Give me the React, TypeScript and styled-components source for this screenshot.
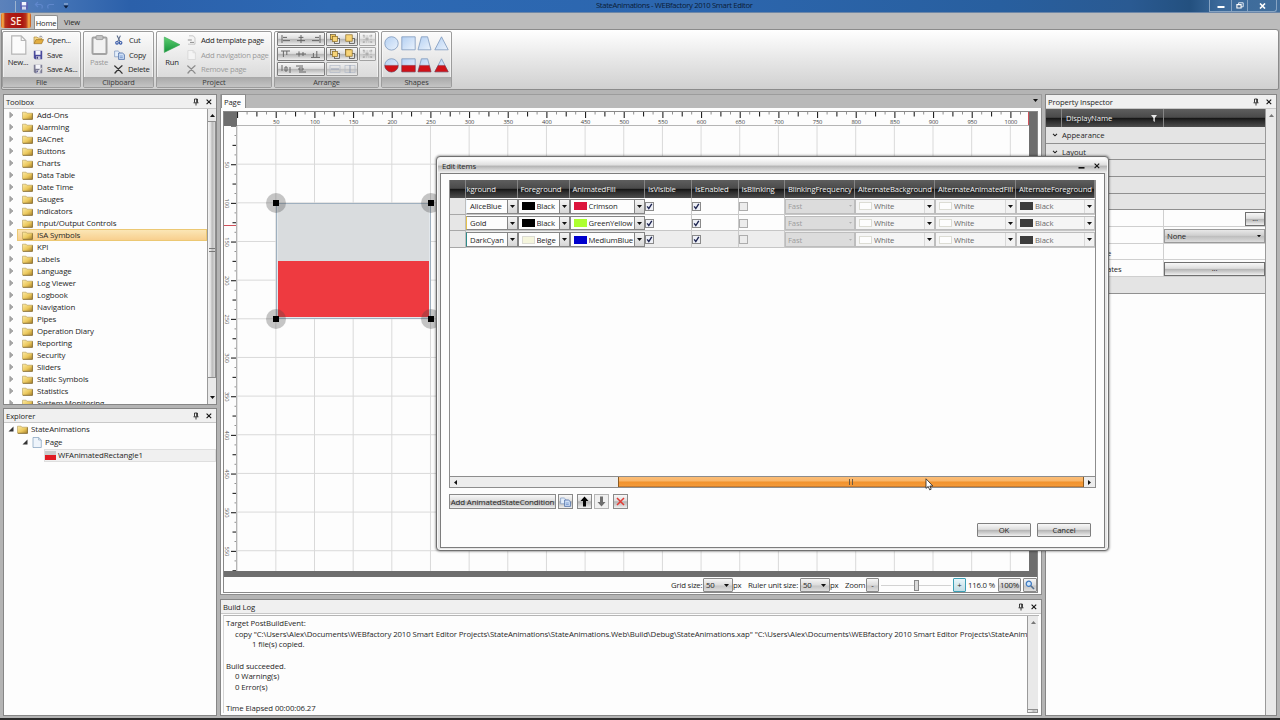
import React from 'react';
import styled, { createGlobalStyle, css } from 'styled-components';

const Global = createGlobalStyle`
  html, body { margin: 0; padding: 0; }
  body { width: 1280px; height: 720px; overflow: hidden; background: #b2b2b2; }
  * { box-sizing: border-box; }
  body, button { font-family: "Open Sans", "Noto Sans", sans-serif; font-size: 7.7px; letter-spacing: -0.14px; color: #262626; line-height: 10px; }
  svg { display: block; flex: none; }
`;

const steel = css`
  background: linear-gradient(#f8f8f8 0%, #dedede 45%, #b4b4b4 52%, #cfcfcf 75%, #f0f0f0 100%);
`;
const soft = css`
  background: linear-gradient(#f6f6f6 0%, #dcdcdc 50%, #c6c6c6 58%, #dedede 100%);
`;
const dark = css`
  background: linear-gradient(#5e5e5e 0%, #4a4a4a 46%, #161616 52%, #2b2b2b 66%, #4d4d4d 100%);
`;

/* ---------- window frame ---------- */
const Window = styled.div`
  position: relative; width: 1280px; height: 720px; overflow: hidden;
  display: flex; flex-direction: column; white-space: nowrap;
  background: #b4b4b4; border-bottom: 2px solid #2b2b2b;
`;
const TitleBar = styled.header`
  height: 13px; flex: none; display: flex; align-items: center; position: relative;
  background: linear-gradient(90deg, #5c82bb 0, #3f70b4 70px, #2b60aa 130px, #2d69b4 330px, #2c66ae 700px, #285f9f 1000px, #2a5a92 1130px, #23507f 1190px, #3c6a9b 1220px, #416e9c 100%);
  border-bottom: 1px solid #6d87a8;
`;
const QuickAccess = styled.div`display: flex; align-items: center; gap: 2px; padding-left: 15px; width: 596px; flex: none; height: 12px;`;
const WindowTitle = styled.div`color: #0b1c36; margin-top: -2px; width: 160px; letter-spacing: -0.36px;`;
const WindowButtons = styled.div`flex: 1; display: flex; justify-content: flex-end; padding-right: 3px; height: 12px;`;
const WinButton = styled.div<{ $w: number }>`
  width: ${p => p.$w}px; height: 12px; border: 1px solid #86a3c2; border-top: 0; border-right-width: 0;
  display: flex; align-items: center; justify-content: center;
  &:last-child { border-right-width: 1px; border-radius: 0 0 3px 0; }
`;
const RibbonTabs = styled.nav`height: 16px; flex: none; display: flex; align-items: flex-end; background: #bcbcbc; padding-left: 1px; position: relative; z-index: 1;`;
const AppButton = styled.div`
  width: 30px; height: 15px; margin-bottom: 1px; border-radius: 2px; color: #ffe9dc; font-weight: 600; font-size: 10px; letter-spacing: 0;
  display: flex; align-items: center; justify-content: center;
  background: linear-gradient(90deg, #d9691d 0, #f7b24a 2px, #b8341a 4px, #b01c14 8px, #a81410 21px, #b8341a 25px, #f7b24a 28px, #c24f1a 30px);
`;
const RibbonTab = styled.div<{ $active?: boolean }>`
  height: 14px; margin-left: ${p => (p.$active ? 3 : 4)}px; width: ${p => (p.$active ? 24 : 20)}px; line-height: 15px; text-align: center; font-size: 7.5px;
  ${p => p.$active && css`background: #fdfdfd; border: 1px solid #8f8f8f; border-bottom: 0; border-radius: 2px 2px 0 0;`}
`;
const Ribbon = styled.div`
  height: 61px; flex: none; border: 1px solid #8b8b8b; border-radius: 0 3px 2px 2px; margin: 0 1px 0 1px;
  background: linear-gradient(#ffffff, #e7e7e7 50%, #d0d0d0); display: flex; gap: 2px; padding: 1px 0 0 0; letter-spacing: -0.28px;
`;
const Group = styled.section<{ $w: number }>`
  width: ${p => p.$w}px; height: 57px; border: 1px solid #9c9c9c; border-radius: 2px; display: flex; flex-direction: column;
  background: linear-gradient(#fbfbfb, #e8e8e8 50%, #d3d3d3); box-shadow: inset 0 0 0 1px rgba(255,255,255,.5);
`;
const GroupBody = styled.div`flex: 1; display: flex; min-height: 0;`;
const GroupTitle = styled.div`height: 10px; line-height: 10px; text-align: center; background: linear-gradient(#a8a8a8, #c4c4c4); color: #3a3a3a; font-size: 7.4px; letter-spacing: -0.12px;`;
const BigButton = styled.div<{ $w: number; $off?: boolean; $pt?: number }>`
  width: ${p => p.$w}px; display: flex; flex-direction: column; align-items: center; justify-content: space-between; padding: ${p => p.$pt ?? 3}px 0 10px;
  color: ${p => (p.$off ? '#9a9a9a' : '#262626')};
`;
const Commands = styled.div`display: flex; flex-direction: column; padding-top: 1px;`;
const Command = styled.div<{ $off?: boolean; $gap?: number }>`
  height: 14.6px; display: flex; align-items: center; gap: ${p => p.$gap ?? 4}px; color: ${p => (p.$off ? '#9b9b9b' : '#262626')};
`;
const ArrangeGrid = styled.div`display: flex; flex-direction: column; gap: 1px; padding: 0 0 0 2px;`;
const ArrangeRow = styled.div`display: flex; gap: 1px;`;
const ArrangeSet = styled.div<{ $w: number; $off?: boolean }>`
  width: ${p => p.$w}px; height: 14px; border: 1px solid #7d7d7d; border-radius: 1px; display: flex; align-items: center; justify-content: space-around; ${steel}
  opacity: ${p => (p.$off ? 0.65 : 1)};
`;
const ShapeGrid = styled.div`display: grid; grid-template-columns: repeat(4, 16.6px); grid-template-rows: 22px 22px; align-items: center; padding: 0 0 0 2px;`;

/* ---------- docking area ---------- */
const Workspace = styled.main`flex: 1; display: flex; padding: 4px 3px 2px 3px; min-height: 0;`;
const Column = styled.div<{ $w: number; $ml?: number }>`width: ${p => p.$w}px; margin-left: ${p => p.$ml ?? 0}px; display: flex; flex-direction: column; flex: none;`;
const Panel = styled.section<{ $h: number; $mt?: number }>`
  height: ${p => p.$h}px; margin-top: ${p => p.$mt ?? 0}px; background: #fdfdfd; border: 1px solid #868686; display: flex; flex-direction: column; overflow: hidden; flex: none;
`;
const PanelHeader = styled.div`
  height: 14px; flex: none; display: flex; align-items: center; padding: 0 4px 0 2px; background: #f0f0f0; border-bottom: 1px solid #c8c8c8; letter-spacing: -0.12px;
`;
const PanelTitle = styled.span`flex: 1;`;
const PanelIcons = styled.div`display: flex; gap: 7px; align-items: center;`;
const Split = styled.div`display: flex; flex: 1; min-height: 0;`;
const List = styled.div`flex: 1; overflow: hidden;`;
const TreeRow = styled.div`
  height: 12px; display: flex; align-items: center; padding-left: 4px; flex: none; font-size: 7.9px; letter-spacing: -0.12px;
`;
const TreeItem = styled.div<{ $sel?: boolean }>`
  flex: 1; height: 12px; margin-left: 2px; padding-left: 4px; display: flex; align-items: center; gap: 4px; border: 1px solid transparent;
  ${p => p.$sel && css`background: linear-gradient(#fbe6b6, #f8cf8e); border-color: #ecc873;`}
`;
const ScrollBar = styled.div<{ $w?: number }>`width: ${p => p.$w ?? 9}px; background: #e9e9e9; border-left: 1px solid #9a9a9a; display: flex; flex-direction: column; align-items: center; flex: none;`;
const ScrollButton = styled.div<{ $h: number }>`height: ${p => p.$h}px; display: flex; align-items: center; justify-content: center;`;
const Thumb = styled.div<{ $h: number }>`
  height: ${p => p.$h}px; width: 100%; border: 1px solid #8e8e8e; border-left: 0; background: linear-gradient(90deg, #f6f6f6, #dcdcdc 45%, #b8b8b8 55%, #d8d8d8); display: flex; align-items: center; justify-content: center;
`;
const LastScrollButton = styled(ScrollButton)`align-items: flex-end; padding-bottom: 5px;`;
const Grip = styled.div`width: 6px; height: 4px; border: 1px solid #777; border-width: 1px 0;`;
const ExplorerRow = styled.div<{ $pl: number; $h: number; $gap?: number }>`height: ${p => p.$h}px; padding-left: ${p => p.$pl}px; display: flex; align-items: center; gap: ${p => p.$gap ?? 3}px; font-size: 7.9px; letter-spacing: -0.12px; flex: none;`;
const ExplorerSelected = styled.div`height: 13px; margin: 0 0 0 40px; display: flex; align-items: center; gap: 2px; background: #f0f0f0; border: 1px solid #dedede; font-size: 7.9px; letter-spacing: -0.12px;`;
const RectIcon = styled.i`width: 11px; height: 9px; background: linear-gradient(#c9cdcd 40%, #e01b22 40%);`;

/* ---------- designer ---------- */
const DocTabs = styled.div`height: 14px; flex: none; display: flex; align-items: flex-end; justify-content: space-between; background: #b9b9b9; border: 1px solid #9c9c9c; border-bottom: 0; padding-right: 3px;`;
const DocTab = styled.div`height: 14px; width: 25px; background: #fdfdfd; border: 1px solid #8c8c8c; border-bottom: 0; line-height: 15px; padding-left: 2px;`;
const DocDrop = styled.div`height: 9px;`;
const DocPanel = styled.div`height: 487px; flex: none; background: #fdfdfd; border: 1px solid #8c8c8c; border-top: 0; padding: 3px 3px 2px 2px; display: flex; flex-direction: column;`;
const DocInner = styled.div`border: 1px solid #888; display: flex; flex-direction: column; flex: 1;`;
const Designer = styled.div`display: grid; grid-template-columns: 13px 792px 1fr; grid-template-rows: 14px 445px 6px; background: #6e6e6e; height: 465px; flex: none; overflow: hidden;`;
const RulerH = styled.div`background: #fdfdfd; border-bottom: 1px solid #b5b5b5; overflow: hidden;`;
const RulerV = styled.div`background: #fdfdfd; border-right: 1px solid #b5b5b5; overflow: hidden;`;
const Canvas = styled.div`
  position: relative; overflow: hidden;
  background-color: #fdfdfd;
  background-image: linear-gradient(90deg, transparent 37.67px, #d9d9d9 37.67px), linear-gradient(transparent 37.67px, #d9d9d9 37.67px);
  background-size: 38.667px 38.667px; background-position: 0.7px 0;
`;
const Shape = styled.div`
  position: absolute; left: 39px; top: 77px; width: 155px; height: 116px; border: 1px solid #9fb0bf; padding: 0 1px 1px 1px;
  background: linear-gradient(#d9dcde 50.5%, #ee3a40 50.5%) content-box, #e3e8ec;
`;
const Handle = styled.div<{ $x: number; $y: number }>`
  position: absolute; left: ${p => p.$x - 10}px; top: ${p => p.$y - 10}px; width: 20px; height: 20px; border-radius: 50%; background: rgba(70,70,70,.3); padding: 7px;
  &::after { content: ''; display: block; width: 6px; height: 6px; background: #000; }
`;
const StatusBar = styled.div`flex: 1; display: flex; align-items: center; justify-content: flex-end; padding: 1px 0 0; letter-spacing: -0.2px; font-size: 7.8px;`;
const Spacer = styled.div<{ $w: number; $h?: number }>`width: ${p => p.$w}px; height: ${p => p.$h ?? 0}px; flex: none;`;
const StatusText = styled.span<{ $w: number }>`width: ${p => p.$w}px; flex: none;`;
const StatusCombo = styled.div`width: 30px; height: 14px; border: 1px solid #8a8a8a; border-radius: 1px; display: flex; align-items: center; justify-content: space-between; padding: 0 3px 0 2px; ${soft}`;
const StatusButton = styled.div<{ $w: number; $hot?: boolean }>`
  width: ${p => p.$w}px; height: 14px; border: 1px solid ${p => (p.$hot ? '#3c9fb5' : '#8a8a8a')}; border-radius: 1px; display: flex; align-items: center; justify-content: center; flex: none; ${soft}
  ${p => p.$hot && css`background: linear-gradient(#e8f6fa, #c3dde4);`}
`;
const Slider = styled.div`width: 74px; height: 12px; flex: none; display: flex; align-items: center; justify-content: center; background: linear-gradient(#d2d2d2, #d2d2d2) center / 70px 1px no-repeat;`;
const SliderThumb = styled.i`width: 5px; height: 11px; border: 1px solid #888; background: #dadada; margin-left: 1px;`;

/* ---------- build log ---------- */
const LogBox = styled.div`margin: 1px 2px 2px 2px; flex: 1; display: flex; border-top: 1px solid #b5b5b5; border-left: 1px solid #d5d5d5; overflow: hidden;`;
const LogText = styled.pre`margin: 0; padding: 2px 0 0 2px; width: 803px; overflow: hidden; font-family: inherit; line-height: 10.65px; font-size: 7.8px; letter-spacing: -0.1px;`;
const LogLine = styled.div<{ $in?: number }>`padding-left: ${p => p.$in ?? 0}px; height: 10.65px;`;

/* ---------- property inspector ---------- */
const DarkHeader = styled.div`height: 18px; display: flex; color: #f4f4f4; ${dark}`;
const DarkCell = styled.div<{ $w: number; $pl?: number }>`
  width: ${p => p.$w}px; flex: none; height: 18px; line-height: 18px; border-right: 1px solid #858585; padding-left: ${p => p.$pl ?? 3}px; overflow: hidden; letter-spacing: -0.12px; font-weight: 500;
  display: flex; align-items: center; justify-content: space-between; padding-right: 0;
`;
const PropGroup = styled.div`height: 16.7px; background: #e4e4e4; border-bottom: 1px solid #909090; display: flex; align-items: center; gap: 4px; padding: 1px 0 0 6px; font-size: 7.7px; letter-spacing: -0.05px;`;
const PropRow = styled.div`height: 16.6px; display: flex; border-bottom: 1px solid #cfcfcf;`;
const PropName = styled.div`width: 118px; flex: none; padding-left: 61px; line-height: 18px; border-right: 1px solid #cfcfcf;`;
const PropValue = styled.div`flex: 1; display: flex; justify-content: flex-end; padding: 2px 0 0 0;`;
const PropButton = styled.div<{ $w?: number }>`width: ${p => (p.$w ? p.$w + 'px' : '100%')}; height: 14px; border: 1px solid #6f6f6f; text-align: center; line-height: 11px; ${steel}`;
const PropCombo = styled.div`width: 100%; height: 14px; border: 1px solid #9a9a9a; display: flex; align-items: center; justify-content: space-between; padding: 0 3px 0 2px; background: linear-gradient(#e8e8e8, #cfcfcf 45%, #bdbdbd 52%, #dcdcdc);`;

/* ---------- dialog ---------- */
const Dialog = styled.div`
  position: absolute; left: 436px; top: 156px; width: 673px; height: 395px; border: 1px solid #707070; border-radius: 4px; background: #e6e6e6; padding: 0 3px 2px 3px;
  display: flex; flex-direction: column; box-shadow: 0 0 2px 1px rgba(0,0,0,.3), inset 0 0 0 1px #f8f8f8;
`;
const DialogTitle = styled.div`
  height: 15px; margin: 1px -2px 0; padding: 0 7px 0 4px; flex: none; display: flex; align-items: center; justify-content: space-between; border-radius: 3px 3px 0 0;
  background: linear-gradient(#ffffff 0, #dedede 48%, #b2b2b2 53%, #cfcfcf 75%, #f2f2f2 100%);
`;
const DialogIcons = styled(PanelIcons)`gap: 9px;`;
const DialogBody = styled.div`flex: 1; border: 1px solid #7d7d7d; background: #fdfdfd; padding: 6px 9px 0 8px; display: flex; flex-direction: column;`;
const Table = styled.div`height: 308px; width: 647px; flex: none; border: 1px solid #8d8d8d; border-top: 0; display: flex; flex-direction: column;`;
const TableRow = styled.div<{ $alt?: boolean }>`height: 16.7px; display: flex; border-bottom: 1px solid #c6c6c6; background: ${p => (p.$alt ? '#ededed' : '#fdfdfd')};`;
const Cell = styled.div<{ $w: number; $tone?: 'stub' | 'check' }>`
  width: ${p => p.$w}px; flex: none; height: 16.7px; overflow: hidden; display: flex; align-items: center;
  ${p => p.$tone === 'stub' && css`background: #e6e6e6; border-right: 1px solid #bdbdbd; border-bottom: 1px solid #a8a8a8;`}
  ${p => p.$tone === 'check' && css`border-right: 1px solid #c9c9c9;`}
`;
const Combo = styled.div<{ $off?: boolean; $flat?: boolean; $edge?: string }>`
  flex: 1; height: 14.5px; margin: 0; display: flex; align-items: center; border: 1px solid ${p => (p.$off ? '#bdbdbd' : '#858585')}; min-width: 0;
  background: ${p => (p.$flat ? '#dcdcdc' : p.$off ? '#f5f5f5' : '#fdfdfd')}; color: ${p => (p.$flat ? '#9c9c9c' : p.$off ? '#6b6b6b' : '#262626')};
  ${p => p.$edge && css`border-left-color: ${p.$edge};`}
`;
const Swatch = styled.i<{ $c: string; $line?: string }>`width: 13px; height: 8px; margin: 0 2px 0 3px; border: 1px solid ${p => p.$line ?? p.$c}; background: ${p => p.$c}; flex: none;`;
const ComboText = styled.span<{ $pl?: number }>`flex: 1; overflow: hidden; padding-left: ${p => p.$pl ?? 0}px; letter-spacing: -0.12px;`;
const ComboDrop = styled.span<{ $off?: boolean }>`
  width: 10px; height: 12.5px; border-left: 1px solid ${p => (p.$off ? '#d8d8d8' : '#858585')}; display: flex; align-items: center; justify-content: center; flex: none;
  background: ${p => (p.$off ? '#f2f2f2' : 'linear-gradient(#f4f4f4, #d6d6d6)')};
`;
const Check = styled.span<{ $off?: boolean }>`
  width: 9px; height: 9px; border: 1px solid ${p => (p.$off ? '#adadad' : '#8a8a8a')}; background: ${p => (p.$off ? '#ececec' : '#eef0f6')}; display: flex; align-items: center; justify-content: center;
`;
const HScroll = styled.div`height: 11px; margin-top: auto; display: flex; border-top: 1px solid #8d8d8d; background: #ededed;`;
const HArrow = styled.div<{ $w: number }>`width: ${p => p.$w}px; display: flex; align-items: center; padding-left: 4px;`;
const HThumb = styled.div`
  flex: 1; border: 1px solid #8a5a22; border-width: 0 1px; background: linear-gradient(#fbbd77 0, #f9b568 42%, #f1922d 48%, #f39a3a 88%, #a8662b 100%);
  display: flex; align-items: center; justify-content: center; gap: 2px;
  i { width: 1px; height: 6px; background: #6c5b45; }
`;
const ToolRow = styled.div`display: flex; margin-top: 6px; height: 15px; align-items: stretch;`;
const ToolButton = styled.div<{ $w: number; $ml?: number; $off?: boolean }>`
  width: ${p => p.$w}px; margin-left: ${p => p.$ml ?? 0}px; border: 1px solid ${p => (p.$off ? '#b5b5b5' : '#8a8a8a')}; display: flex; align-items: center; justify-content: center; ${steel}
  font-size: 7.9px; letter-spacing: -0.12px;
  ${p => p.$off && css`background: #f0f0f0;`}
`;
const DialogActions = styled.div`display: flex; justify-content: flex-end; gap: 6px; margin-top: 14px; padding-right: 4px;`;
const ActionButton = styled.div`width: 54px; height: 14px; border: 1px solid #7f7f7f; border-radius: 1px; line-height: 13px; text-align: center; ${steel}`;
const Pointer = styled.div`position: absolute; left: 925px; top: 478px;`;

/* ---------- icons ---------- */
const Pin = () => (<svg width="6" height="8" viewBox="0 0 6 8"><path d="M1.5 4.5V1h2.8v3.5M0.5 4.8h5M3 5v2.5" fill="none" stroke="#111" strokeWidth=".8" /><path d="M3.4 1h1v3.6h-1z" fill="#111" /></svg>);
const Close = () => (<svg width="6" height="6" viewBox="0 0 6 6"><path d="M.6.6l4.6 4.6M5.2.6L.6 5.2" stroke="#111" strokeWidth="1.1" /></svg>);
const Down = ({ c = '#111', s = 5 }: { c?: string; s?: number }) => (<svg width={s} height={s * 0.6} viewBox="0 0 5 3"><path d="M0 0h5L2.5 3z" fill={c} /></svg>);
const Up = ({ c = '#111' }: { c?: string }) => (<svg width="5" height="3" viewBox="0 0 5 3"><path d="M0 3h5L2.5 0z" fill={c} /></svg>);
const Expand = () => (<svg width="7" height="8" viewBox="0 0 7 8"><path d="M1.8 1.2L5 4 1.8 6.8z" fill="#aaa" stroke="#8a8a8a" strokeWidth=".6" /></svg>);
const Collapse = () => (<svg width="6" height="6" viewBox="0 0 6 6"><path d="M5.5.5v5h-5z" fill="#333" /></svg>);
const Folder = () => (
  <svg width="11" height="9" viewBox="0 0 11 9">
    <defs><linearGradient id="fold" x1="0" y1="0" x2="1" y2="1"><stop offset="0" stopColor="#fbeaa6" /><stop offset=".55" stopColor="#ecc95e" /><stop offset="1" stopColor="#a9822c" /></linearGradient></defs>
    <path d="M.5 1.2h3.6l.8 1h5.6v6H.5z" fill="url(#fold)" stroke="#b49a55" strokeWidth=".6" /><path d="M10.4 2.4v6H1" fill="none" stroke="#7a6126" strokeWidth=".7" />
  </svg>
);
const PageIcon = ({ w = 10, h = 11, c = '#7f9dbb', fill = '#eef4fb' }) => (
  <svg width={w} height={h} viewBox="0 0 10 11" preserveAspectRatio="none"><path d="M1 .5h5.6L9.3 3v7.5H1z" fill={fill} stroke={c} strokeWidth=".7" /><path d="M6.6.5V3h2.7" fill="none" stroke={c} strokeWidth=".6" /></svg>
);
const SaveIcon = ({ gray }: { gray?: boolean }) => (
  <svg width="10" height="10" viewBox="0 0 10 10"><path d="M.8.8h8.4v8.4H2L.8 8z" fill={gray ? '#7c7c93' : '#4a4a9c'} /><path d="M2.5.8h5v4h-5z" fill="#f4f4fa" /><path d="M3 6.2h4.4v3H3z" fill="#c9c9dd" /><path d="M3.6 6.8h1.3v2H3.6z" fill="#30306e" />{gray && <path d="M4.5 9L8.6 4" stroke="#ddd" strokeWidth="1.3" />}</svg>
);
const OpenIcon = () => (<svg width="11" height="10" viewBox="0 0 11 10"><path d="M1 8.5V2h3l1 1h3.6v1.6" fill="#f3d789" stroke="#a67d2e" strokeWidth=".6" /><path d="M1 8.7L3 4.6h7.6L8.6 8.7z" fill="#e3ae41" stroke="#94691e" strokeWidth=".6" /><path d="M6.5 1.4q2-1 3 1" fill="none" stroke="#667" strokeWidth=".7" /></svg>);
const PasteIcon = () => (<svg width="17" height="20" viewBox="0 0 17 20"><rect x="1.5" y="2.5" width="14" height="16.5" rx="1" fill="#f2f2f2" stroke="#a3a3a3" strokeWidth="2" /><rect x="5" y=".6" width="7" height="4" rx="1" fill="#c4c4c4" stroke="#8f8f8f" strokeWidth=".8" /></svg>);
const CutIcon = () => (<svg width="10" height="10" viewBox="0 0 10 10"><path d="M3 .6l3 6M6.4.6L3.8 6.4" stroke="#5b6c8a" strokeWidth="1.1" /><circle cx="3" cy="7.8" r="1.3" fill="none" stroke="#3558a8" strokeWidth="1.1" /><circle cx="6.6" cy="7.8" r="1.3" fill="none" stroke="#3558a8" strokeWidth="1.1" /></svg>);
const CopyIcon = () => (<svg width="11" height="10" viewBox="0 0 11 10"><path d="M.6 1h3.6l1.4 1.3v4.5h-5z" fill="#e4eefb" stroke="#7a93bd" strokeWidth=".7" /><path d="M4.6 3h3.8l2 1.6v4.8H4.6z" fill="#cfe0f7" stroke="#4a6ba5" strokeWidth=".8" /><path d="M5.8 6h3M5.8 7.6h3" stroke="#5d83c2" strokeWidth=".7" /></svg>);
const DeleteIcon = ({ c = '#333' }) => (<svg width="9" height="9" viewBox="0 0 9 9"><path d="M.8 1Q4 3.5 8 8.2M8 .8Q4.5 3.5 1 8" stroke={c} strokeWidth="1.3" fill="none" strokeLinecap="round" /></svg>);
const RunIcon = () => (<svg width="18" height="18" viewBox="0 0 18 18"><defs><linearGradient id="run" x1="0" y1="0" x2="0" y2="1"><stop offset="0" stopColor="#5ccf70" /><stop offset="1" stopColor="#14933a" /></linearGradient></defs><path d="M1.3 1L17 8.7 1.3 16.4z" fill="url(#run)" stroke="#3aa856" strokeWidth=".6" /></svg>);
const TemplateIcon = () => (<svg width="9" height="10" viewBox="0 0 9 10"><path d="M2 .8h4L8 2.6v6.6H1" fill="#f4f4f4" stroke="#b5b5b5" strokeWidth=".7" /><path d="M.8 5h4M3 7.4h4" stroke="#8f8f8f" /></svg>);

const alignPaths = [
  'M1 0v8M2 2.4h4M2 5.6h7', 'M5 0v8M2.6 2.4h4.8M1 5.6h8', 'M9 0v8M4 2.4h4M1 5.6h7',
  'M0 1h9M2.4 1v6M5.8 1v4', 'M0 4h10M3 1.4v5.2M7 2v4', 'M0 7.4h9M2.4 3v4M5.8 1v6',
  'M1 0v6M9 2v6M4 2v4h2v-4z', 'M0 1h7M3 7h7M3 3h4v2H3z',
];
const AlignIcon = ({ i }: { i: number }) => (<svg width="10" height="8" viewBox="0 0 10 8"><path d={alignPaths[i]} stroke="#666" strokeWidth="1" fill="none" /></svg>);
const OrderIcon = ({ v }: { v: number }) => (
  <svg width="10" height="10" viewBox="0 0 10 10">
    {v !== 1 && <rect x=".6" y=".6" width="5" height="5" fill={v === 2 ? '#d8d8d8' : '#f2c75b'} stroke="#6b5a30" strokeWidth=".7" />}
    <rect x="4.4" y="4.4" width="5" height="5" fill={v === 0 ? '#e8e8e8' : '#ddd'} stroke="#444" strokeWidth=".7" />
    <rect x={v === 1 || v === 3 ? 0.8 : 2.4} y={v === 1 || v === 3 ? 0.8 : 2.4} width={v % 2 ? 6.4 : 5.2} height={v % 2 ? 6.4 : 5.2} fill="#f7d478" stroke="#8b6c25" strokeWidth=".7" />
  </svg>
);
const GroupIcon = () => (<svg width="11" height="10" viewBox="0 0 11 10"><path d="M2 2h7v6H2z" fill="none" stroke="#8a8a8a" strokeWidth=".8" strokeDasharray="1.4 1" /><path d="M3.5 3.5h3v3h-3zM.8.8h1.8v1.8H.8zM8.4.8h1.8v1.8H8.4zM.8 7.2h1.8V9H.8zM8.4 7.2h1.8V9H8.4z" fill="#8f8f8f" /></svg>);
const SizeIcon = ({ v }: { v?: boolean }) => (<svg width="12" height="8" viewBox="0 0 12 8"><rect x="1" y=".6" width="10" height="6.8" fill="none" stroke="#9aa6ba" strokeWidth=".7" /><path d={v ? 'M6 0v8' : 'M2 4h8'} stroke="#6f7f9f" /></svg>);

const outlines = ['', 'M.8.8h13.4v13H.8z', 'M4.4.8h6.2l3.4 13H1z', 'M7.5.8l6.7 13H.8z'];
const bottoms = ['', 'M.8 7.4h13.4v6.4H.8z', 'M2.7 7.4h9.6L14 13.8H1z', 'M4.1 7.4h6.8l3.3 6.4H.8z'];
const ShapeIcon = ({ i, fill }: { i: number; fill?: boolean }) => (
  <svg width="15" height="15" viewBox="0 0 15 15">
    <defs><linearGradient id="blue" x1="0" y1="0" x2="1" y2="1"><stop offset="0" stopColor="#b4d0f2" /><stop offset="1" stopColor="#eaf2fc" /></linearGradient></defs>
    {i === 0 ? <circle cx="7.5" cy="7.4" r="6.7" fill="url(#blue)" stroke="#7d98bd" strokeWidth=".8" /> : <path d={outlines[i]} fill="url(#blue)" stroke="#7d98bd" strokeWidth=".8" />}
    {fill && (i === 0 ? <path d="M.8 7.4h13.4a6.7 6.5 0 0 1-13.4 0z" fill="#cf1118" stroke="#8a2a35" strokeWidth=".5" /> : <path d={bottoms[i]} fill="#cf1118" stroke="#8a2a35" strokeWidth=".5" />)}
  </svg>
);

/* ---------- rulers ---------- */
const STEP = 38.667;
const ticks = (n: number) => Array.from({ length: n }, (_, k) => ({ pos: (k * STEP) / 4, size: k % 4 === 0 ? 6 : k % 2 === 0 ? 4.5 : 2.5 }));
const HorizontalRuler = () => (
  <svg width="792" height="13">
    {ticks(83).map((t, k) => <rect key={k} x={t.pos} y="0" width={k % 2 ? 0.8 : 1.1} height={t.size} fill={k % 2 ? '#777' : '#222'} />)}
    {Array.from({ length: 20 }, (_, k) => <text key={k} x={(k + 1) * STEP + 0.5} y="12.2" fontSize="5.8" textAnchor="middle" letterSpacing="-0.15" fill="#444">{(k + 1) * 50}</text>)}
    <rect x="791" y="0" width="1" height="13" fill="#d0505a" />
  </svg>
);
const VerticalRuler = () => (
  <svg width="13" height="446">
    {ticks(47).map((t, k) => <rect key={k} x={13 - t.size} y={t.pos - 0.5} height={k % 2 ? 0.8 : 1.1} width={t.size} fill={k % 2 ? '#777' : '#222'} />)}
    {Array.from({ length: 11 }, (_, k) => <text key={k} transform={`translate(1.3 ${(k + 1) * STEP}) rotate(90)`} fontSize="5.8" textAnchor="middle" letterSpacing="-0.15" fill="#555">{(k + 1) * 50}</text>)}
    <rect x="0" y="99" width="13" height="1" fill="#d0505a" />
  </svg>
);

const toolbox = ['Add-Ons', 'Alarming', 'BACnet', 'Buttons', 'Charts', 'Data Table', 'Date Time', 'Gauges', 'Indicators', 'Input/Output Controls', 'ISA Symbols', 'KPI', 'Labels', 'Language', 'Log Viewer', 'Logbook', 'Navigation', 'Pipes', 'Operation Diary', 'Reporting', 'Security', 'Sliders', 'Static Symbols', 'Statistics', 'System Monitoring'];
const columns: [string, number, number][] = [['', 16, 3], ['kground', 51.5, 0.5], ['Foreground', 52, 3], ['AnimatedFill', 75.5, 3], ['IsVisible', 47, 3], ['IsEnabled', 46.5, 3], ['IsBlinking', 46.5, 3], ['BlinkingFrequency', 70, 3], ['AlternateBackground', 80, 3], ['AlternateAnimatedFill', 81, 3], ['AlternateForeground', 79, 3]];
const rows = [
  { edge: '#f0f8ff', bg: 'AliceBlue', fg: ['Black', '#000'], fill: ['Crimson', '#dc143c'] },
  { edge: '#e5c24a', bg: 'Gold', fg: ['Black', '#000'], fill: ['GreenYellow', '#adff2f'] },
  { edge: '#2d8b8b', bg: 'DarkCyan', fg: ['Beige', '#f5f5dc'], fill: ['MediumBlue', '#0000cd'] },
];

const ColorCombo = ({ color, name, off }: { color: string; name: string; off?: boolean }) => (
  <Combo $off={off}>
    <Swatch $c={color} $line={color === '#f5f5dc' || color === '#fdfdfd' ? '#dcdcd4' : undefined} />
    <ComboText>{name}</ComboText>
    <ComboDrop $off={off}><Down /></ComboDrop>
  </Combo>
);
const Tick = ({ on }: { on?: boolean }) => (
  <Check $off={!on}>{on && <svg width="7" height="7" viewBox="0 0 7 7"><path d="M1.2 3.4L2.8 5.6 5.8.9" fill="none" stroke="#1c2350" strokeWidth="1.4" /></svg>}</Check>
);
const HeaderBar = ({ title }: { title: string }) => (<PanelHeader><PanelTitle>{title}</PanelTitle><PanelIcons><Pin /><Close /></PanelIcons></PanelHeader>);

export default function App() {
  return (
    <Window>
      <Global />
      <TitleBar>
        <QuickAccess>
          <svg width="46" height="11" viewBox="0 0 46 11"><path d="M.5 0v11" stroke="#9db3cf" /><path d="M5 1h8v7.5H5z" fill="#5a64b4" /><path d="M6.8 1h4.4v3.4H6.8z" fill="#f4f6ff" /><path d="M7 5.6h4v3H7z" fill="#d6daf0" /><path d="M21 3.5h4.5q3 1 1.2 4M23 1l-2.6 2.5L23 6M39 3.5h-4.5q-3 1-1.2 4" fill="none" stroke="#5f87cc" strokeWidth="1.2" /></svg>
          <svg width="6" height="6" viewBox="0 0 6 6"><path d="M.5 2.6h5L3 5.6z" fill="#0e1f3c" /><path d="M1 1h4" stroke="#c8d6ea" strokeWidth=".8" /></svg>
        </QuickAccess>
        <WindowTitle>StateAnimations - WEBfactory 2010 Smart Editor</WindowTitle>
        <WindowButtons>
          <WinButton $w={22}><svg width="8" height="7" viewBox="0 0 8 7"><path d="M.5 4h7v2h-7z" fill="#fff" /></svg></WinButton>
          <WinButton $w={16}><svg width="8" height="7" viewBox="0 0 8 7"><path d="M2.6.8h4.6v4H2.6z" fill="none" stroke="#dfe8f2" /><path d="M.9 2.6h4.2v3.4H.9z" fill="#46678c" stroke="#fff" strokeWidth="1.1" /></svg></WinButton>
          <WinButton $w={30}><svg width="7" height="6" viewBox="0 0 7 6"><path d="M1 .5l5 5M6 .5l-5 5" stroke="#fff" strokeWidth="1.6" /></svg></WinButton>
        </WindowButtons>
      </TitleBar>
      <RibbonTabs>
        <AppButton>SE</AppButton>
        <RibbonTab $active>Home</RibbonTab>
        <RibbonTab>View</RibbonTab>
      </RibbonTabs>
      <Ribbon>
        <Group $w={79}>
          <GroupBody>
            <BigButton $w={30}><PageIcon w={17} h={20} c="#b5b5b5" fill="#fbfbfb" />New...</BigButton>
            <Commands>
              <Command $gap={3}><OpenIcon />Open...</Command>
              <Command><SaveIcon />Save</Command>
              <Command><SaveIcon gray />Save As...</Command>
            </Commands>
          </GroupBody>
          <GroupTitle>File</GroupTitle>
        </Group>
        <Group $w={71}>
          <GroupBody>
            <BigButton $w={30} $off><PasteIcon />Paste</BigButton>
            <Commands>
              <Command $gap={5}><CutIcon />Cut</Command>
              <Command $gap={4}><CopyIcon />Copy</Command>
              <Command $gap={5}><DeleteIcon />Delete</Command>
            </Commands>
          </GroupBody>
          <GroupTitle>Clipboard</GroupTitle>
        </Group>
        <Group $w={116}>
          <GroupBody>
            <BigButton $w={30} $pt={4}><RunIcon />Run</BigButton>
            <Commands>
              <Command $gap={5}><TemplateIcon />Add template page</Command>
              <Command $off $gap={5}><PageIcon w={9} h={10} c="#d0d0d0" fill="#f4f4f4" />Add navigation page</Command>
              <Command $off $gap={5}><DeleteIcon c="#8c8c8c" />Remove page</Command>
            </Commands>
          </GroupBody>
          <GroupTitle>Project</GroupTitle>
        </Group>
        <Group $w={105}>
          <GroupBody>
            <ArrangeGrid>
              <ArrangeRow><ArrangeSet $w={48}><AlignIcon i={0} /><AlignIcon i={1} /><AlignIcon i={2} /></ArrangeSet><ArrangeSet $w={32}><OrderIcon v={0} /><OrderIcon v={1} /></ArrangeSet><ArrangeSet $w={17} $off><GroupIcon /></ArrangeSet></ArrangeRow>
              <ArrangeRow><ArrangeSet $w={48}><AlignIcon i={3} /><AlignIcon i={4} /><AlignIcon i={5} /></ArrangeSet><ArrangeSet $w={32}><OrderIcon v={2} /><OrderIcon v={3} /></ArrangeSet><ArrangeSet $w={17} $off><GroupIcon /></ArrangeSet></ArrangeRow>
              <ArrangeRow><ArrangeSet $w={48}><AlignIcon i={6} /><AlignIcon i={7} /><Spacer $w={10} /></ArrangeSet><ArrangeSet $w={32} $off><SizeIcon /><SizeIcon v /></ArrangeSet></ArrangeRow>
            </ArrangeGrid>
          </GroupBody>
          <GroupTitle>Arrange</GroupTitle>
        </Group>
        <Group $w={71}>
          <GroupBody>
            <ShapeGrid>{[0, 1, 2, 3].map(i => <ShapeIcon key={i} i={i} />)}{[0, 1, 2, 3].map(i => <ShapeIcon key={i + 4} i={i} fill />)}</ShapeGrid>
          </GroupBody>
          <GroupTitle>Shapes</GroupTitle>
        </Group>
      </Ribbon>

      <Workspace>
        <Column $w={214}>
          <Panel $h={311}>
            <HeaderBar title="Toolbox" />
            <Split>
              <List>
                {toolbox.map(name => (
                  <TreeRow key={name}><Expand /><TreeItem $sel={name === 'ISA Symbols'}><Folder />{name}</TreeItem></TreeRow>
                ))}
              </List>
              <ScrollBar>
                <ScrollButton $h={12}><Up /></ScrollButton>
                <Thumb $h={257}><Grip /></Thumb>
                <LastScrollButton $h={26}><Down /></LastScrollButton>
              </ScrollBar>
            </Split>
          </Panel>
          <Panel $h={308} $mt={3}>
            <HeaderBar title="Explorer" />
            <ExplorerRow $pl={4} $h={12.5} $gap={3}><Collapse /><Folder /><span>StateAnimations</span></ExplorerRow>
            <ExplorerRow $pl={18} $h={13} $gap={3.5}><Collapse /><PageIcon />Page</ExplorerRow>
            <ExplorerSelected><RectIcon />WFAnimatedRectangle1</ExplorerSelected>
          </Panel>
        </Column>

        <Column $w={822} $ml={3}>
          <DocTabs><DocTab>Page</DocTab><DocDrop><Down /></DocDrop></DocTabs>
          <DocPanel>
            <DocInner>
              <Designer>
                <span />
                <RulerH><HorizontalRuler /></RulerH>
                <span />
                <RulerV><VerticalRuler /></RulerV>
                <Canvas>
                  <Shape />
                  <Handle $x={39} $y={77} /><Handle $x={193.5} $y={77} /><Handle $x={39} $y={193} /><Handle $x={193.5} $y={193} />
                </Canvas>
              </Designer>
              <StatusBar>
                <StatusText $w={32}>Grid size:</StatusText><StatusCombo>50<Down /></StatusCombo><StatusText $w={15}>px</StatusText>
                <StatusText $w={52}>Ruler unit size:</StatusText><StatusCombo>50<Down /></StatusCombo><StatusText $w={15}>px</StatusText>
                <StatusText $w={21}>Zoom</StatusText><StatusButton $w={13}>-</StatusButton>
                <Slider><SliderThumb /></Slider>
                <StatusButton $w={13} $hot>+</StatusButton><Spacer $w={2} /><StatusText $w={30}>116.0 %</StatusText>
                <StatusButton $w={23}>100%</StatusButton><Spacer $w={2} />
                <StatusButton $w={14}><svg width="10" height="10" viewBox="0 0 10 10"><circle cx="3.8" cy="3.8" r="2.6" fill="#cfe6fb" stroke="#3c78c0" strokeWidth="1.2" /><path d="M5.8 5.8L9 9" stroke="#57708e" strokeWidth="1.6" /></svg></StatusButton>
              </StatusBar>
            </DocInner>
          </DocPanel>
          <Panel $h={117} $mt={4}>
            <HeaderBar title="Build Log" />
            <LogBox>
              <LogText>
                <LogLine>Target PostBuildEvent:</LogLine>
                <LogLine $in={9}>{'copy "C:\\Users\\Alex\\Documents\\WEBfactory 2010 Smart Editor Projects\\StateAnimations\\StateAnimations.Web\\Build\\Debug\\StateAnimations.xap" "C:\\Users\\Alex\\Documents\\WEBfactory 2010 Smart Editor Projects\\StateAnim'}</LogLine>
                <LogLine $in={26}>1 file(s) copied.</LogLine>
                <LogLine />
                <LogLine>Build succeeded.</LogLine>
                <LogLine $in={9}>0 Warning(s)</LogLine>
                <LogLine $in={9}>0 Error(s)</LogLine>
                <LogLine />
                <LogLine>Time Elapsed 00:00:06.27</LogLine>
              </LogText>
              <ScrollBar $w={11}><ScrollButton $h={12}><Up c="#777" /></ScrollButton><Spacer $w={1} $h={81} /><Thumb $h={4} /></ScrollBar>
            </LogBox>
          </Panel>
        </Column>

        <Column $w={232} $ml={3}>
          <Panel $h={622}>
            <HeaderBar title="Property Inspector" />
            <Split>
              <List>
                <DarkHeader>
                  <DarkCell $w={16} />
                  <DarkCell $w={102} $pl={4}>DisplayName<svg width="12" height="7" viewBox="0 0 12 7"><path d="M0 0h6L3.8 3v4L2.4 6V3z" fill="#e8e8e8" /></svg></DarkCell>
                  <DarkCell $w={102} />
                </DarkHeader>
                {['Appearance', 'Layout', '', '', ''].map((g, i) => (
                  <PropGroup key={i}>{g && <svg width="6" height="4" viewBox="0 0 6 4"><path d="M1 .8l2 2 2-2" fill="none" stroke="#222" strokeWidth="1.1" /></svg>}{g}</PropGroup>
                ))}
                <PropRow><PropName /><PropValue><PropButton $w={20}>...</PropButton></PropValue></PropRow>
                <PropRow><PropName /><PropValue><PropCombo>None<Down s={4} /></PropCombo></PropValue></PropRow>
                <PropRow><PropName>e</PropName><PropValue /></PropRow>
                <PropRow><PropName>ates</PropName><PropValue><PropButton>...</PropButton></PropValue></PropRow>
                <PropGroup />
              </List>
              <ScrollBar $w={11}><ScrollButton $h={12}><Up c="#777" /></ScrollButton></ScrollBar>
            </Split>
          </Panel>
        </Column>
      </Workspace>

      <Dialog>
        <DialogTitle>
          <span>Edit items</span>
          <DialogIcons><svg width="7" height="6" viewBox="0 0 7 6"><path d="M.5 4h6v1.6h-6z" fill="#111" /></svg><Close /></DialogIcons>
        </DialogTitle>
        <DialogBody>
          <Table>
            <DarkHeader>{columns.map(([name, w, pl]) => <DarkCell key={name} $w={w} $pl={pl}>{name}</DarkCell>)}</DarkHeader>
            {rows.map((r, i) => (
              <TableRow key={i} $alt={i === 2}>
                <Cell $w={16} $tone="stub" />
                <Cell $w={51.5}><Combo $edge={r.edge}><ComboText $pl={3}>{r.bg}</ComboText><ComboDrop><Down /></ComboDrop></Combo></Cell>
                <Cell $w={52}><ColorCombo color={r.fg[1]} name={r.fg[0]} /></Cell>
                <Cell $w={75.5}><ColorCombo color={r.fill[1]} name={r.fill[0]} /></Cell>
                <Cell $w={47} $tone="check"><Tick on /></Cell>
                <Cell $w={46.5} $tone="check"><Tick on /></Cell>
                <Cell $w={46.5} $tone="check"><Tick /></Cell>
                <Cell $w={70}><Combo $off $flat><ComboText $pl={2}>Fast</ComboText><Down c="#b0b0b0" s={3} /><Spacer $w={2} /></Combo></Cell>
                <Cell $w={80}><ColorCombo color="#fdfdfd" name="White" off /></Cell>
                <Cell $w={81}><ColorCombo color="#fdfdfd" name="White" off /></Cell>
                <Cell $w={79}><ColorCombo color="#3c3c3c" name="Black" off /></Cell>
              </TableRow>
            ))}
            <HScroll>
              <HArrow $w={168}><svg width="3" height="5" viewBox="0 0 3 5"><path d="M3 0v5L0 2.5z" fill="#111" /></svg></HArrow>
              <HThumb><i /><i /></HThumb>
              <HArrow $w={11}><svg width="3" height="5" viewBox="0 0 3 5"><path d="M0 0v5l3-2.5z" fill="#111" /></svg></HArrow>
            </HScroll>
          </Table>
          <ToolRow>
            <ToolButton $w={107}>Add AnimatedStateCondition</ToolButton>
            <ToolButton $w={15} $ml={2}><CopyIcon /></ToolButton>
            <ToolButton $w={15} $ml={4}><svg width="9" height="11" viewBox="0 0 9 11"><path d="M4.5.5l4 4.5H6v5.5H3V5H.5z" fill="#000" /></svg></ToolButton>
            <ToolButton $w={15} $ml={2} $off><svg width="9" height="11" viewBox="0 0 9 11"><path d="M4.5 10.5l4-4.5H6V.5H3V6H.5z" fill="#6e6e6e" /></svg></ToolButton>
            <ToolButton $w={15} $ml={4}><svg width="9" height="9" viewBox="0 0 9 9"><path d="M1 1l7 7M8 1L1 8" stroke="#e23b35" strokeWidth="1.5" /></svg></ToolButton>
          </ToolRow>
          <DialogActions><ActionButton>OK</ActionButton><ActionButton>Cancel</ActionButton></DialogActions>
        </DialogBody>
      </Dialog>
      <Pointer><svg width="9" height="14" viewBox="0 0 9 14"><path d="M1 .8v9.6l2.2-2 1.5 3.5 1.5-.7L4.8 8h3z" fill="#fff" stroke="#222" strokeWidth=".8" /></svg></Pointer>
    </Window>
  );
}
